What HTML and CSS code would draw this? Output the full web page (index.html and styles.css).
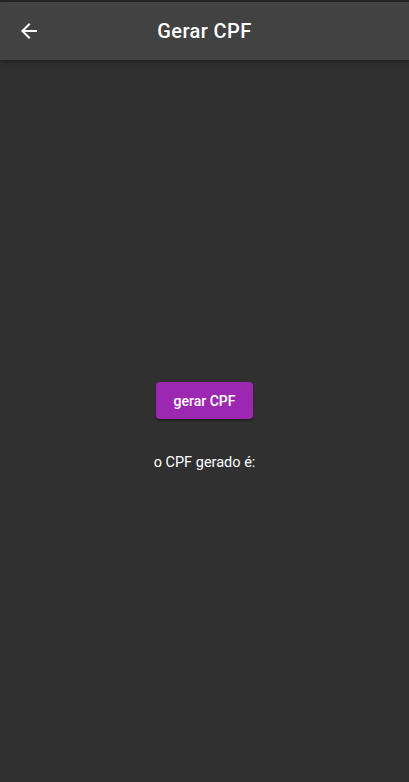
FILE: index.html
```html
<!DOCTYPE html>
<html lang="pt">
<head>
<meta charset="utf-8">
<title>Gerar CPF</title>
<link rel="stylesheet" href="styles.css">
</head>
<body>
<div class="screen">
  <div class="status"></div>
  <header class="appbar">
    <button class="back" aria-label="Voltar">
      <svg viewBox="0 0 24 24" width="24" height="24"><path fill="#fff" d="M20 11H7.83l5.59-5.59L12 4l-8 8 8 8 1.41-1.41L7.83 13H20v-2z"/></svg>
    </button>
    <h1 class="title">Gerar CPF</h1>
  </header>
  <main class="content">
    <button class="gen">gerar CPF</button>
    <p class="result">o CPF gerado é:</p>
  </main>
</div>
</body>
</html>
```
FILE: styles.css
```css
html, body {
  margin: 0;
  padding: 0;
  height: 100%;
  background: #303030;
}
.screen {
  height: 782px;
  display: flex;
  flex-direction: column;
  font-family: Roboto, "Liberation Sans", sans-serif;
  color: #fff;
}
.status {
  height: 2px;
  background: #262626;
  flex: none;
}
.appbar {
  position: relative;
  height: 58px;
  flex: none;
  background: #424242;
  display: flex;
  align-items: center;
  justify-content: center;
  box-shadow: 0 2px 4px rgba(0,0,0,0.35);
  z-index: 1;
}
.back {
  position: absolute;
  left: 17px;
  top: 17px;
  width: 24px;
  height: 24px;
  padding: 0;
  border: 0;
  background: none;
  display: flex;
}
.title {
  margin: 0;
  font-size: 20px;
  font-weight: 500;
  letter-spacing: 0.4px;
}
.content {
  flex: 1;
  display: flex;
  flex-direction: column;
  align-items: center;
  justify-content: center;
  padding-top: 12px;
}
.gen {
  height: 37px;
  width: 97px;
  padding: 0;
  border: 0;
  border-radius: 4px;
  background: #9c27b0;
  color: #fff;
  font-family: Roboto, "Liberation Sans", sans-serif;
  font-size: 14px;
  font-weight: 500;
  box-shadow: 0 2px 2px rgba(0,0,0,0.3);
}
.result {
  margin: 35px 0 0;
  font-size: 14.5px;
  line-height: 18px;
}
```
